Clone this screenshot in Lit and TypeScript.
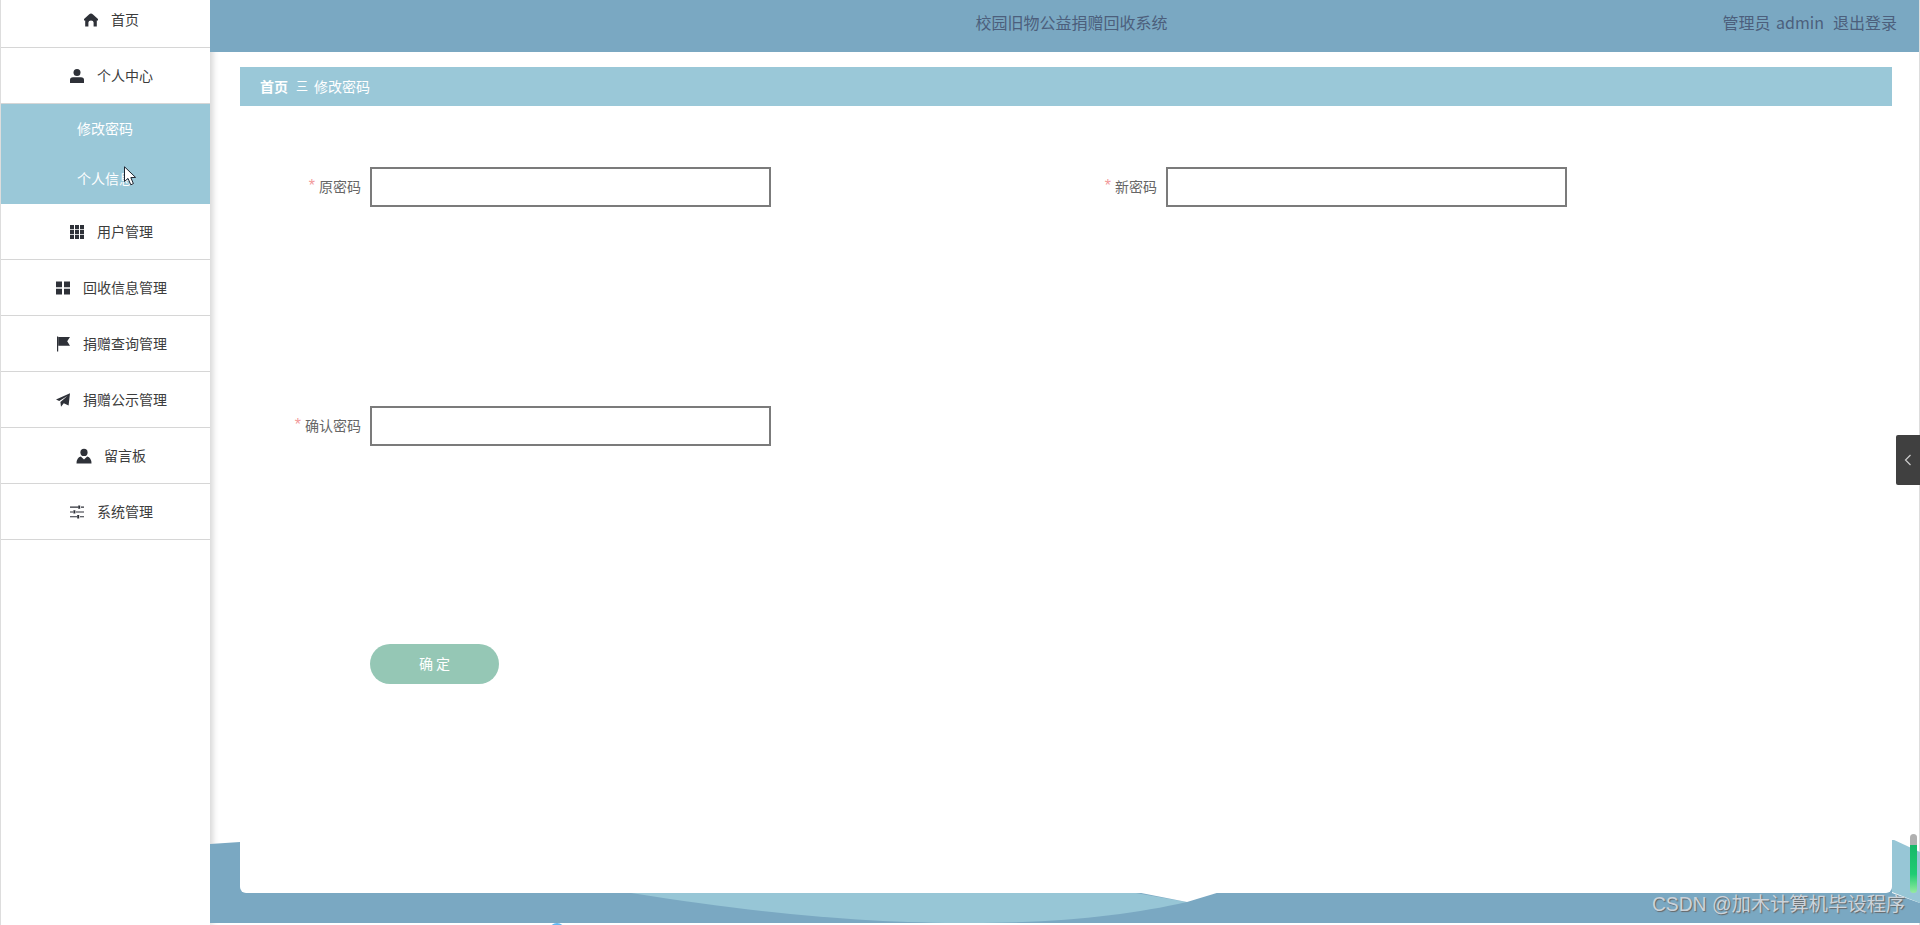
import {LitElement, html, css, svg} from 'lit';
import {customElement} from 'lit/decorators.js';

const icons = {
  home: svg`<path d="M7 0.4 Q8 0.4 9 1.4 L14 6 L14 7.4 L12.8 7.4 L12.8 13.4 L9.6 13.4 L9.6 9.6 Q9.6 7.6 7 7.6 Q4.4 7.6 4.4 9.6 L4.4 13.4 L1.2 13.4 L1.2 7.4 L0 7.4 L0 6 L5 1.4 Q6 0.4 7 0.4 Z"/>`,
  user: svg`<circle cx="7" cy="3.6" r="3.5"/><path d="M0 14 L0 11 Q0 8.2 3 8.2 L11 8.2 Q14 8.2 14 11 L14 14 Z"/>`,
  grid: svg`<path d="M0 0h4v4.2H0zM5 0h4v4.2H5zM10 0h4v4.2h-4zM0 4.9h4v4.2H0zM5 4.9h4v4.2H5zM10 4.9h4v4.2h-4zM0 9.8h4V14H0zM5 9.8h4V14H5zM10 9.8h4V14h-4z"/>`,
  large: svg`<path d="M0 0.5h6v5.8H0zM8 0.5h6v5.8H8zM0 7.7h6v5.8H0zM8 7.7h6v5.8H8z"/>`,
  flag: svg`<path d="M1 -0.5h1.2v15H1z"/><path d="M2.2 0 L14 0 L11.2 4.2 L14 8.8 L2.2 8.8 Z"/>`,
  plane: svg`<path d="M14 0.3 L12.6 12.6 L7.8 10.2 L5 13.8 L4.4 9 L11.4 3 L3.2 8 L0 6.6 Z"/>`,
  person: svg`<circle cx="7" cy="3.4" r="3.6"/><path d="M-0.5 14.5 Q-0.3 8.4 3.8 7.6 L7 10.4 L10.2 7.6 Q14.3 8.4 14.5 14.5 Z"/>`,
  sliders: svg`<path d="M0 1.6h8v1.1H0zM11 1.6h3v1.1h-3zM8.2 0.4h2v3.4h-2zM0 6.4h3v1.1H0zM6 6.4h8v1.1H6zM3.4 5.2h2v3.4h-2zM0 11.2h7v1.1H0zM10 11.2h4v1.1h-4zM7.2 10h2v3.4h-2z"/>`,
};

type IconName = keyof typeof icons;

const menu: {icon: IconName; label: string; sub?: string[]}[] = [
  {icon: 'home', label: '首页'},
  {icon: 'user', label: '个人中心', sub: ['修改密码', '个人信息']},
  {icon: 'grid', label: '用户管理'},
  {icon: 'large', label: '回收信息管理'},
  {icon: 'flag', label: '捐赠查询管理'},
  {icon: 'plane', label: '捐赠公示管理'},
  {icon: 'person', label: '留言板'},
  {icon: 'sliders', label: '系统管理'},
];

@customElement('app-root')
export class AppRoot extends LitElement {
  static styles = css`
    :host {
      display: block;
      height: 925px;
      overflow: hidden;
      position: relative;
      background: #fff;
      font-family: "Noto Sans CJK SC", "Noto Sans", sans-serif;
      font-size: 14px;
    }

    .layout {
      display: flex;
      height: 925px;
    }

    .sidebar {
      flex: 0 0 210px;
      box-sizing: border-box;
      height: 925px;
      overflow: hidden;
      background: #fff;
      border-left: 1px solid #ddd;
      box-shadow: 3px 0 6px rgba(0, 0, 0, 0.16);
    }

    .menu {
      margin-top: -8px;
    }

    .item {
      box-sizing: border-box;
      height: 56px;
      padding-left: 12px;
      border-bottom: 1px solid #d6d6d6;
      display: flex;
      align-items: center;
      justify-content: center;
      gap: 13px;
      color: #3c3c3c;
      line-height: 1;
    }

    .item svg {
      width: 14px;
      height: 14px;
      overflow: visible;
      fill: #2e3138;
      flex: none;
    }

    .item span {
      margin-bottom: 2px;
    }

    .sub {
      background: #9ac8d8;
    }

    .sub div {
      height: 50px;
      padding-bottom: 2px;
      box-sizing: border-box;
      margin-left: -1px;
      display: flex;
      align-items: center;
      justify-content: center;
      color: #fff;
    }

    .main {
      flex: 1;
      min-width: 0;
      position: relative;
      z-index: 1;
      display: flex;
      flex-direction: column;
      border-right: 1px solid #ddd;
    }

    .wave {
      position: absolute;
      left: 0;
      bottom: 0;
      width: 1710px;
      height: 85px;
    }

    .header {
      flex: 0 0 52px;
      box-sizing: border-box;
      position: relative;
      display: grid;
      grid-template-columns: 1fr auto 1fr;
      align-items: center;
      padding: 0 22px 8px 36px;
      background: #7aa8c2;
      color: #4c5f7c;
      font-size: 16px;
    }

    .user {
      display: flex;
      justify-content: flex-end;
      gap: 9px;
      word-spacing: 2px;
    }

    .card {
      flex: 1;
      position: relative;
      margin: 15px 27px 32px 30px;
      background: #fff;
      border-radius: 0 0 6px 6px;
    }

    .crumb {
      box-sizing: border-box;
      height: 39px;
      padding: 0 0 2px 20px;
      display: flex;
      align-items: center;
      background: #9ac8d8;
      color: #fff;
    }

    .crumb b {
      font-weight: 700;
    }

    .crumb i {
      font-style: normal;
      margin: 0 6px 0 8px;
      font-size: 12px;
    }

    .form {
      display: grid;
      grid-template-columns: 796px 796px;
      grid-template-rows: 239px 238px auto;
      padding: 61px 0 0 10px;
    }

    .field {
      display: flex;
      align-items: flex-start;
      gap: 9px;
    }

    .field label {
      box-sizing: border-box;
      width: 111px;
      height: 38px;
      display: flex;
      align-items: center;
      justify-content: flex-end;
      color: #666;
    }

    .field label span {
      color: #f29a9a;
      font-family: "Liberation Sans", sans-serif;
      font-size: 16px;
      margin-right: 4px;
    }

    input {
      box-sizing: border-box;
      width: 401px;
      height: 40px;
      border: 2px solid #7b7b7b;
      background: #fff;
      outline: none;
    }

    .actions {
      grid-column: 1 / 3;
      padding-left: 120px;
    }

    button {
      width: 129px;
      height: 40px;
      padding: 0 0 2px;
      border: 0;
      border-radius: 20px;
      background: #95c7b5;
      color: #fff;
      font: inherit;
    }

    .toggle {
      position: absolute;
      right: 0;
      top: 435px;
      width: 24px;
      height: 50px;
      border-radius: 2px 0 0 2px;
      background: #404040;
      display: flex;
      align-items: center;
      justify-content: center;
      z-index: 2;
    }

    .toggle svg {
      width: 8px;
      height: 12px;
      fill: none;
      stroke: #ccc;
      stroke-width: 1.2;
    }

    .cursor {
      position: absolute;
      left: 124px;
      top: 166px;
      width: 13px;
      height: 20px;
      z-index: 3;
    }

    .gauge {
      position: absolute;
      left: 1910px;
      top: 834px;
      width: 7px;
      height: 59px;
      border-radius: 4px;
      background: linear-gradient(#b0b0b0 0 11px, #17b868 11px, #1fcc72 40px, #96eaa0 100%);
      z-index: 3;
    }

    .mark {
      position: absolute;
      right: 15px;
      top: 890px;
      color: #ccd3da;
      font-family: "Liberation Sans", "Noto Sans CJK SC", sans-serif;
      font-size: 19.3px;
      line-height: 30px;
      text-shadow: 1px 1px 1px #666;
      z-index: 3;
    }

    .dot {
      position: absolute;
      left: 549px;
      top: 923px;
      width: 16px;
      height: 16px;
      border-radius: 50%;
      background: #62b8f2;
    }
  `;

  renderField(label: string) {
    return html`
      <div class="field">
        <label><span>*</span>${label}</label>
        <input type="password" />
      </div>
    `;
  }

  renderMenu() {
    return menu.map(
      (m) => html`
        <div class="item">
          <svg viewBox="0 0 14 14">${icons[m.icon]}</svg>
          <span>${m.label}</span>
        </div>
        ${m.sub
          ? html`<div class="sub">${m.sub.map((s) => html`<div>${s}</div>`)}</div>`
          : ''}
      `
    );
  }

  render() {
    return html`
      <div class="layout">
        <aside class="sidebar">
          <div class="menu">${this.renderMenu()}</div>
        </aside>
        <div class="main">
          <svg class="wave" viewBox="0 0 1710 85">
            <path fill="#7aa8c2" d="M0 4 L30 2 V43 H40 V53 H1672 V43 H1682 V53 L1710 63 V83 H0 Z" />
            <path fill="#97c6d6" d="M1682 -1 L1710 12 V63 L1682 52 Z" />
            <path fill="#97c6d6" d="M421 53 C560 75 660 83 760 83 C850 83 920 75 977 62 L926 53 Z" />
            <path fill="#fff" d="M926 52 L977 62 L1010 52 Z" />
          </svg>
          <header class="header">
            <span></span>
            <span>校园旧物公益捐赠回收系统</span>
            <div class="user"><span>管理员 admin</span><span>退出登录</span></div>
          </header>
          <section class="card">
            <div class="crumb"><b>首页</b><i>三</i><span>修改密码</span></div>
            <div class="form">
              ${this.renderField('原密码')}
              ${this.renderField('新密码')}
              ${this.renderField('确认密码')}
              <span></span>
              <div class="actions"><button>确 定</button></div>
            </div>
          </section>
        </div>
      </div>
      <div class="toggle">
        <svg viewBox="0 0 8 12"><path d="M6.5 1 L1.5 6 L6.5 11" /></svg>
      </div>
      <svg class="cursor" viewBox="0 0 13 20">
        <path fill="#fff" stroke="#1d2530" stroke-width="1" d="M0.5 0.8 V15.5 L4 12.4 L6.8 18.8 L9.4 17.6 L6.8 11.6 L11.6 11.4 Z" />
      </svg>
      <div class="gauge"></div>
      <div class="mark">CSDN @加木计算机毕设程序</div>
      <div class="dot"></div>
    `;
  }
}
